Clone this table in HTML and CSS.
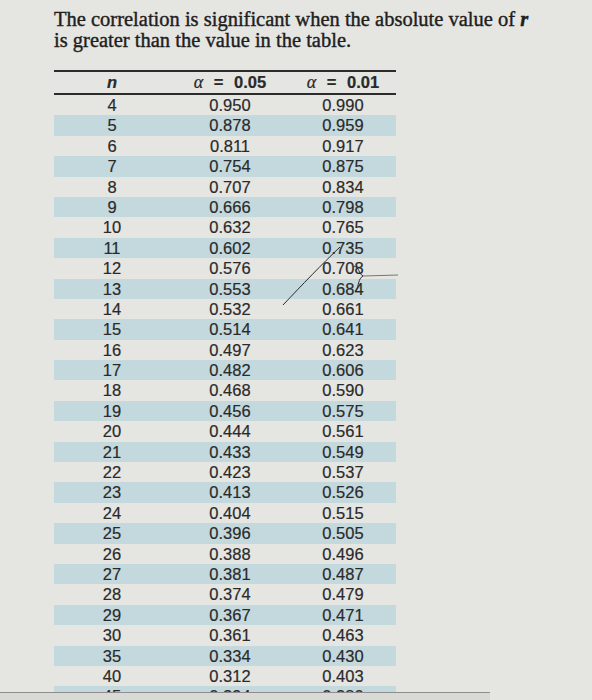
FILE: index.html
```html
<!DOCTYPE html>
<html>
<head>
<meta charset="utf-8">
<link rel="stylesheet" href="styles.css">
</head>
<body>
<div class="page">
  <p class="intro">The correlation is significant when the absolute value of <i class="r">r</i><br>is greater than the value in the table.</p>
  <div class="table">
    <div class="row head"><span><i>n</i></span><span><i class="alpha">α</i> = 0.05</span><span><i class="alpha">α</i> = 0.01</span></div>
    <div class="row"><span>4</span><span>0.950</span><span>0.990</span></div>
    <div class="row"><span>5</span><span>0.878</span><span>0.959</span></div>
    <div class="row"><span>6</span><span>0.811</span><span>0.917</span></div>
    <div class="row"><span>7</span><span>0.754</span><span>0.875</span></div>
    <div class="row"><span>8</span><span>0.707</span><span>0.834</span></div>
    <div class="row"><span>9</span><span>0.666</span><span>0.798</span></div>
    <div class="row"><span>10</span><span>0.632</span><span>0.765</span></div>
    <div class="row"><span>11</span><span>0.602</span><span>0.735</span></div>
    <div class="row"><span>12</span><span>0.576</span><span>0.708</span></div>
    <div class="row"><span>13</span><span>0.553</span><span>0.684</span></div>
    <div class="row"><span>14</span><span>0.532</span><span>0.661</span></div>
    <div class="row"><span>15</span><span>0.514</span><span>0.641</span></div>
    <div class="row"><span>16</span><span>0.497</span><span>0.623</span></div>
    <div class="row"><span>17</span><span>0.482</span><span>0.606</span></div>
    <div class="row"><span>18</span><span>0.468</span><span>0.590</span></div>
    <div class="row"><span>19</span><span>0.456</span><span>0.575</span></div>
    <div class="row"><span>20</span><span>0.444</span><span>0.561</span></div>
    <div class="row"><span>21</span><span>0.433</span><span>0.549</span></div>
    <div class="row"><span>22</span><span>0.423</span><span>0.537</span></div>
    <div class="row"><span>23</span><span>0.413</span><span>0.526</span></div>
    <div class="row"><span>24</span><span>0.404</span><span>0.515</span></div>
    <div class="row"><span>25</span><span>0.396</span><span>0.505</span></div>
    <div class="row"><span>26</span><span>0.388</span><span>0.496</span></div>
    <div class="row"><span>27</span><span>0.381</span><span>0.487</span></div>
    <div class="row"><span>28</span><span>0.374</span><span>0.479</span></div>
    <div class="row"><span>29</span><span>0.367</span><span>0.471</span></div>
    <div class="row"><span>30</span><span>0.361</span><span>0.463</span></div>
    <div class="row"><span>35</span><span>0.334</span><span>0.430</span></div>
    <div class="row"><span>40</span><span>0.312</span><span>0.403</span></div>
    <div class="row"><span>45</span><span>0.294</span><span>0.380</span></div>
  </div>
  <svg class="pen" width="592" height="700" viewBox="0 0 592 700">
    <path d="M283 305 C302 285 322 264 340 247" fill="none" stroke="#2a2a2a" stroke-width="1"/>
    <path d="M354 266 C360 268 358 273 363 276 C358 279 359 285 356 291" fill="none" stroke="#2a2a2a" stroke-width="1"/>
    <path d="M363 276 L398 275" fill="none" stroke="#5a5a5a" stroke-width="0.8"/>
  </svg>
</div>
<div class="edge"></div>
</body>
</html>
```

FILE: styles.css
```css
html, body {
  margin: 0;
  padding: 0;
}
body {
  width: 592px;
  height: 700px;
  overflow: hidden;
  background: #e5e5e2;
}
.page {
  position: relative;
  height: 692px;
  overflow: hidden;
  padding-left: 54px;
  background: #e5e5e2;
}
.intro {
  margin: 0;
  padding-top: 9px;
  font-family: "Liberation Serif", "Times New Roman", serif;
  font-size: 20.5px;
  line-height: 21px;
  color: #1e1e1e;
  -webkit-text-stroke: 0.4px #1e1e1e;
}
.r {
  font-weight: bold;
}
.table {
  margin-top: 19px;
  width: 342px;
  border-top: 2px solid #2c2c2c;
  font-family: "Liberation Sans", Arial, sans-serif;
  font-size: 16.5px;
  color: #2a2a2a;
  -webkit-text-stroke: 0.2px #2a2a2a;
}
.row {
  display: grid;
  grid-template-columns: 116px 120px 106px;
  height: 20.4px;
  line-height: 20.4px;
  text-align: center;
}
.row:nth-child(odd) {
  background: #c4d9de;
}
.row.head {
  background: none;
  height: 21px;
  line-height: 21px;
  font-weight: bold;
  word-spacing: 6px;
  border-bottom: 2px solid #2c2c2c;
}
.alpha {
  font-family: "Liberation Serif", serif;
  font-weight: normal;
  font-size: 18px;
}
.pen {
  position: absolute;
  left: 0;
  top: 0;
  pointer-events: none;
}
.edge {
  width: 490px;
  height: 8px;
  border-top: 1px solid #8e8e8c;
  background: #d9d9d6;
}
```
